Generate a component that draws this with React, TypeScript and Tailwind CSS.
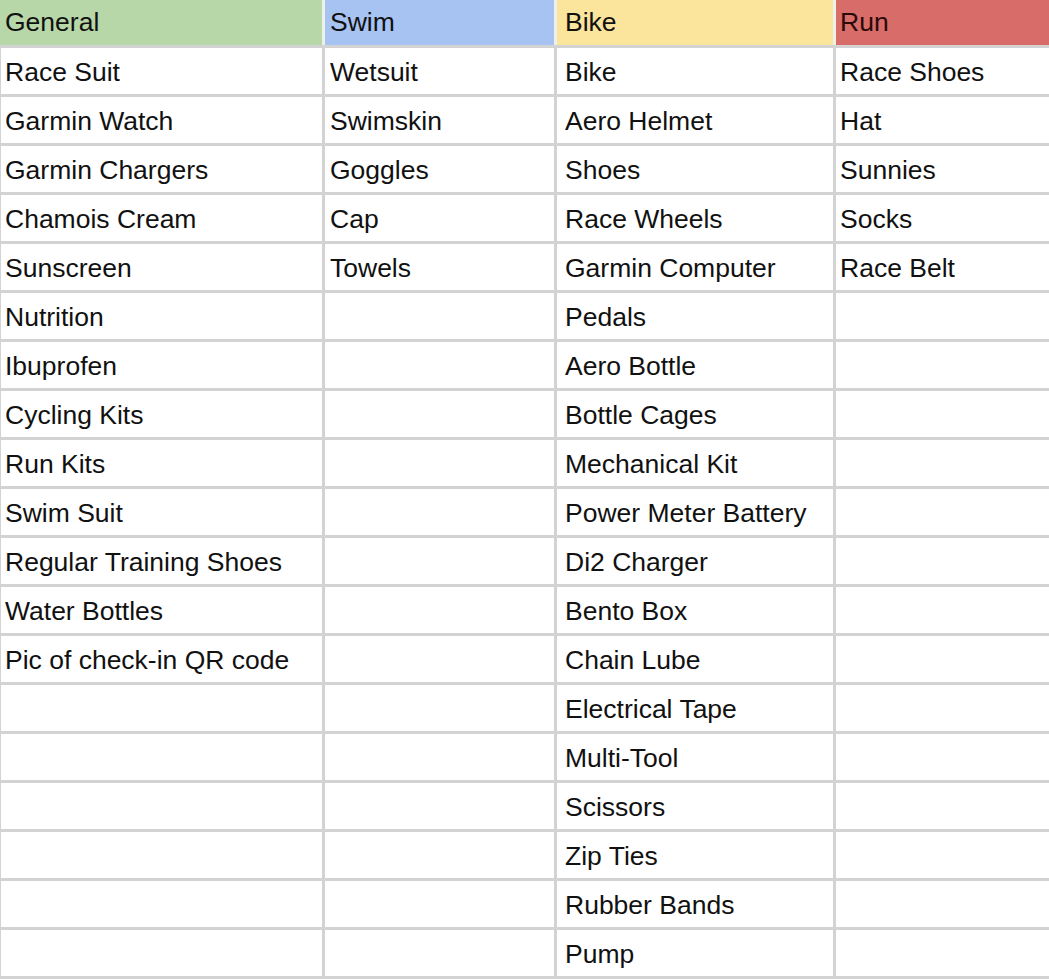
const general = [
  "Race Suit",
  "Garmin Watch",
  "Garmin Chargers",
  "Chamois Cream",
  "Sunscreen",
  "Nutrition",
  "Ibuprofen",
  "Cycling Kits",
  "Run Kits",
  "Swim Suit",
  "Regular Training Shoes",
  "Water Bottles",
  "Pic of check-in QR code",
];

const swim = ["Wetsuit", "Swimskin", "Goggles", "Cap", "Towels"];

const bike = [
  "Bike",
  "Aero Helmet",
  "Shoes",
  "Race Wheels",
  "Garmin Computer",
  "Pedals",
  "Aero Bottle",
  "Bottle Cages",
  "Mechanical Kit",
  "Power Meter Battery",
  "Di2 Charger",
  "Bento Box",
  "Chain Lube",
  "Electrical Tape",
  "Multi-Tool",
  "Scissors",
  "Zip Ties",
  "Rubber Bands",
  "Pump",
];

const run = ["Race Shoes", "Hat", "Sunnies", "Socks", "Race Belt"];

const ROWS = 19;

export default function App() {
  const rows = Array.from({ length: ROWS }, (_, i) => [
    general[i] || "",
    swim[i] || "",
    bike[i] || "",
    run[i] || "",
  ]);

  return (
    <div
      className="w-[1049px] h-[979px] overflow-hidden bg-white text-[26.5px] text-[#111]"
      style={{ fontFamily: '"Liberation Sans", Arial, sans-serif' }}
    >
      {/* header */}
      <div className="grid grid-cols-[322px_229px_276px_213px] gap-x-[3px] bg-[#eef0ea] h-[45px]">
        <div className="bg-[#b7d7a8] pl-[5px] pt-[1px] flex items-center">General</div>
        <div className="bg-[#a7c3f1] pl-[5px] pt-[1px] flex items-center">Swim</div>
        <div className="bg-[#fbe49c] pl-[8px] pt-[1px] flex items-center">Bike</div>
        <div className="bg-[#d86c68] pl-[4px] pt-[1px] flex items-center text-[#2a0a08]">Run</div>
      </div>

      {/* body */}
      <div className="grid grid-cols-[321px_229px_276px_213px] auto-rows-[46px] gap-[3px] bg-[#d3d3d3] py-[3px] border-l-[1px] border-[#d3d3d3]">
        {rows.map((row, r) =>
          row.map((cell, c) => (
            <div
              key={r + "-" + c}
              className={
                "bg-white flex items-center whitespace-nowrap pt-[3px] " +
                (c === 2 ? "pl-[8px]" : c === 3 ? "pl-[4px]" : c === 0 ? "pl-[4px]" : "pl-[5px]")
              }
            >
              {cell}
            </div>
          ))
        )}
      </div>
    </div>
  );
}
